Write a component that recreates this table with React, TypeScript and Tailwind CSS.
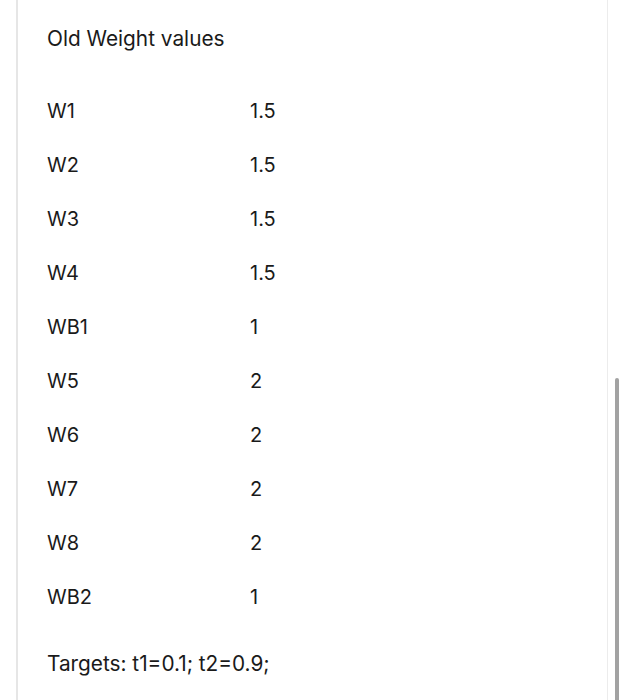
const rows: Array<[string, string]> = [
  ['W1', '1.5'],
  ['W2', '1.5'],
  ['W3', '1.5'],
  ['W4', '1.5'],
  ['WB1', '1'],
  ['W5', '2'],
  ['W6', '2'],
  ['W7', '2'],
  ['W8', '2'],
  ['WB2', '1'],
]

export default function App() {
  return (
    <div className="relative h-[700px] w-[624px] overflow-hidden bg-white font-['Inter',sans-serif] text-[#1a1a1a]">
      <div className="ml-4 h-full w-[592px] border-l-2 border-r border-l-[#e6e6e6] border-r-[#ececec] pl-[29px] pt-[25px]">
        <h2 className="text-[20.8px] leading-[28px]">Old Weight values</h2>
        <table className="mt-[31px] text-[20px]">
          <tbody>
            {rows.map(([name, value]) => (
              <tr key={name} className="h-[54px]">
                <td className="w-[203px] align-middle">{name}</td>
                <td className="align-middle">{value}</td>
              </tr>
            ))}
          </tbody>
        </table>
        <p className="mt-[26px] text-[20.8px] leading-[28px]">Targets: t1=0.1; t2=0.9;</p>
      </div>
      <div className="absolute right-[5px] top-[378px] h-[330px] w-[4px] rounded-full bg-[#a2a2a2]" />
    </div>
  )
}
